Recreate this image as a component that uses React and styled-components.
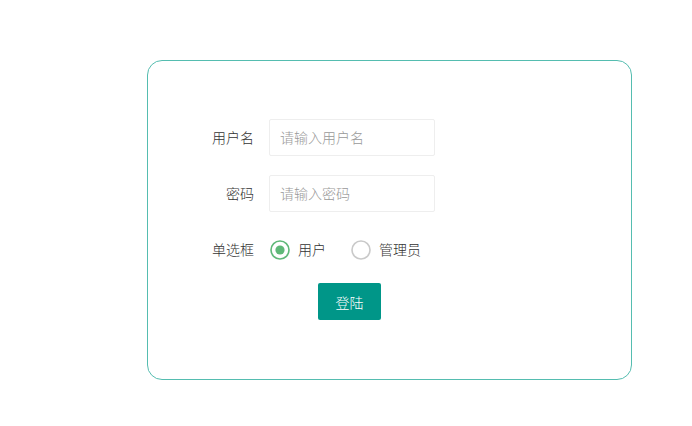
import React from "react";
import styled, { createGlobalStyle } from "styled-components";

const Global = createGlobalStyle`
  html, body { margin: 0; padding: 0; background: #fff; }
  body {
    font-family: "Liberation Sans", "Noto Sans CJK SC", sans-serif;
    font-size: 14px;
    font-weight: 300;
    color: #333;
  }
`;

const Page = styled.div`
  width: 692px;
  height: 426px;
  padding: 60px 0 0 147px;
  box-sizing: border-box;
`;

const Card = styled.div`
  width: 485px;
  height: 320px;
  box-sizing: border-box;
  border: 1px solid #55bdb0;
  border-radius: 15px;
  padding: 58px 0 0 10px;
  display: flex;
  flex-direction: column;
`;

const Row = styled.div`
  display: flex;
  align-items: center;
  height: 37px;
  margin-bottom: ${(p) => p.$mb || 0}px;
`;

const Label = styled.label`
  width: 96px;
  text-align: right;
  padding-right: 15px;
  line-height: 20px;
  color: #333;
  font-size: 14px;
  flex-shrink: 0;
`;

const Input = styled.input`
  width: 166px;
  height: 37px;
  box-sizing: border-box;
  border: 1px solid #eeeeee;
  border-radius: 2px;
  padding: 0 10px;
  font-family: inherit;
  font-weight: 300;
  font-size: 14px;
  color: #333;
  outline: none;
  &::placeholder { color: #999; }
`;

const RadioGroup = styled.div`
  display: flex;
  align-items: center;
  gap: 25px;
  padding-left: 1px;
`;

const RadioItem = styled.div`
  display: flex;
  align-items: center;
  gap: 8px;
  cursor: pointer;
`;

const RadioText = styled.span`
  font-size: 14px;
  color: #333;
  line-height: 20px;
`;

const Button = styled.button`
  margin-left: 160px;
  height: 37px;
  width: 63px;
  padding: 0;
  border: none;
  border-radius: 2px;
  background: #009688;
  color: #fff;
  font-family: inherit;
  font-weight: 300;
  font-size: 14px;
  cursor: pointer;
`;

const Radio = ({ checked }) => (
  <svg width="20" height="20" viewBox="0 0 20 20">
    <circle
      cx="10"
      cy="10"
      r="9"
      fill="none"
      stroke={checked ? "#5FB878" : "#c9c9c9"}
      strokeWidth="1.6"
    />
    {checked && <circle cx="10" cy="10" r="4.6" fill="#5FB878" />}
  </svg>
);

export default function App() {
  return (
    <>
      <Global />
      <Page>
        <Card>
          <Row $mb={19}>
            <Label>用户名</Label>
            <Input placeholder="请输入用户名" />
          </Row>
          <Row $mb={19}>
            <Label>密码</Label>
            <Input type="password" placeholder="请输入密码" />
          </Row>
          <Row $mb={15}>
            <Label>单选框</Label>
            <RadioGroup>
              <RadioItem>
                <Radio checked />
                <RadioText>用户</RadioText>
              </RadioItem>
              <RadioItem>
                <Radio />
                <RadioText>管理员</RadioText>
              </RadioItem>
            </RadioGroup>
          </Row>
          <Row>
            <Button>登陆</Button>
          </Row>
        </Card>
      </Page>
    </>
  );
}
